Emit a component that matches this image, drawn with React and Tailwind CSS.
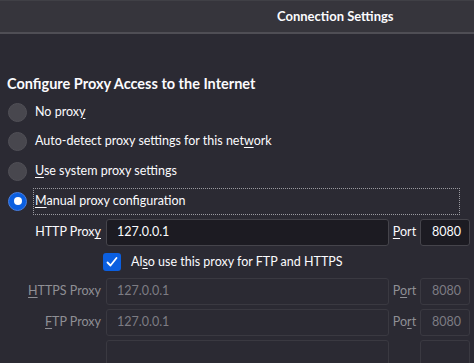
import React from "react";

const U = ({ children }) => <span className="underline underline-offset-2">{children}</span>;

function Radio({ checked }) {
  if (checked) {
    return (
      <span className="w-[19px] h-[19px] rounded-full bg-[#0b5fe0] border border-[#4a7fe0] flex items-center justify-center shrink-0">
        <span className="w-[8px] h-[8px] rounded-full bg-white" />
      </span>
    );
  }
  return <span className="w-[19px] h-[19px] rounded-full bg-[#48474e] border border-[#515057] shrink-0" />;
}

function ProxyRow({ label, disabled, value = "127.0.0.1", port = "8080" }) {
  const text = disabled ? "text-[#8f8f95]" : "text-[#fbfbfe]";
  const box = disabled
    ? "bg-[#2b2a33] border-[#3a3941] text-[#7d7c83]"
    : "bg-[#1c1b22] border-[#45444b] text-[#fbfbfe]";
  return (
    <div className="flex items-center h-[27px]">
      <div className={`w-[102px] text-right pr-[1px] ${text}`}>{label.name}</div>
      <div className={`ml-[4px] w-[283px] h-full border rounded-[3px] flex items-center pl-[10px] ${box}`}>{value}</div>
      <div className={`w-[31px] text-center ${text}`}>{label.port}</div>
      <div className={`w-[50px] h-full border rounded-[3px] flex items-center justify-end pr-[8px] ${box}`}>{port}</div>
    </div>
  );
}

export default function App() {
  return (
    <div className="w-[474px] h-[363px] overflow-hidden bg-[#2b2a33] text-[#fbfbfe] text-[12.5px]" style={{ fontFamily: 'Lato, "Noto Sans", sans-serif' }}>
      <div className="h-[34px] bg-[#36353c] border-b-2 border-[#4f4e55] border-t border-t-[#404046] flex items-center pl-[277px]">
        <span className="font-bold text-[13px]">Connection Settings</span>
      </div>

      <div className="pt-[40px] pl-[7px] font-bold text-[14.5px] leading-[20px]">Configure Proxy Access to the Internet</div>

      <div className="pl-[8px] mt-[3px] flex flex-col">
        <div className="flex items-center h-[30px] gap-[8px]">
          <Radio />
          <span>No prox<U>y</U></span>
        </div>
        <div className="flex items-center h-[29px] gap-[8px]">
          <Radio />
          <span>Auto-detect proxy settings for this net<U>w</U>ork</span>
        </div>
        <div className="flex items-center h-[30px] gap-[8px]">
          <Radio />
          <span><U>U</U>se system proxy settings</span>
        </div>
        <div className="flex items-center h-[30px] gap-[6px]">
          <Radio checked />
          <span className="border border-dotted border-[#9a9aa0] w-[427px] h-[27px] flex items-center pl-[1px]"><U>M</U>anual proxy configuration</span>
        </div>
      </div>

      <div className="mt-[3px] flex flex-col">
        <ProxyRow label={{ name: <>HTTP Prox<U>y</U></>, port: <><U>P</U>ort</> }} />
        <div className="flex items-center h-[32px] pl-[103px] gap-[10px]">
          <span className="w-[18px] h-[18px] rounded-[3px] bg-[#0b5fe0] flex items-center justify-center">
            <svg width="14" height="14" viewBox="0 0 14 14" fill="none">
              <path d="M2.5 7.5 L5.5 10.5 L11.5 3" stroke="white" strokeWidth="1.8" strokeLinecap="round" strokeLinejoin="round" />
            </svg>
          </span>
          <span>Al<U>s</U>o use this proxy for FTP and HTTPS</span>
        </div>
        <div className="flex flex-col gap-[4px]">
          <ProxyRow disabled label={{ name: <><U>H</U>TTPS Proxy</>, port: <>P<U>o</U>rt</> }} />
          <ProxyRow disabled label={{ name: <><U>F</U>TP Proxy</>, port: <>Po<U>r</U>t</> }} />
          <ProxyRow disabled label={{ name: "", port: "" }} value="" port="" />
        </div>
      </div>
    </div>
  );
}
